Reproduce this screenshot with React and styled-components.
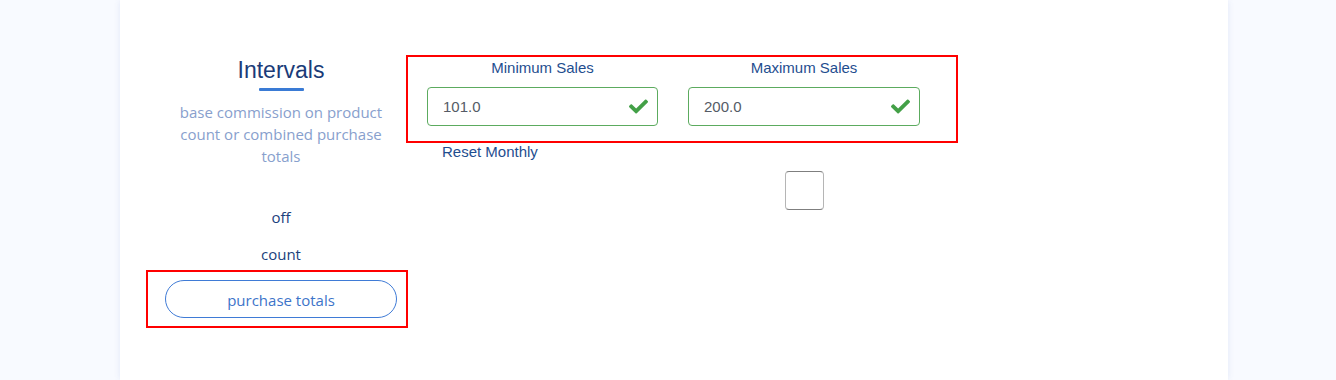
import React from "react";
import styled, { createGlobalStyle } from "styled-components";
import { FaCheck } from "react-icons/fa";

const Global = createGlobalStyle`
  html, body { margin: 0; padding: 0; background: #f8faff; }
  body { font-family: "Liberation Sans", Arial, sans-serif; }
  * { box-sizing: border-box; }
`;

const Page = styled.div`
  height: 380px;
  overflow: hidden;
  display: flex;
  padding-left: 120px;
`;

const Card = styled.div`
  width: 1108px;
  height: 380px;
  background: #ffffff;
  box-shadow: 0 0 6px rgba(70, 100, 190, 0.12);
  display: flex;
  align-items: flex-start;
  padding-top: 55px;
`;

const LeftCol = styled.div`
  width: 250px;
  margin-left: 36px;
  display: flex;
  flex-direction: column;
  align-items: center;
`;

const Title = styled.h2`
  margin: 2px 0 0;
  font-family: "Liberation Sans", Arial, sans-serif;
  font-weight: 400;
  font-size: 23px;
  line-height: 26px;
  color: #1a3b78;
`;

const Underline = styled.div`
  width: 45px;
  height: 3px;
  margin-top: 5px;
  background: #3a7bd5;
  border-radius: 1px;
`;

const Description = styled.p`
  margin: 10px 0 0;
  width: 215px;
  text-align: center;
  font-family: "Open Sans", sans-serif;
  font-size: 15px;
  line-height: 22px;
  color: #88a0cd;
`;

const Option = styled.div`
  margin-top: ${(p) => p.$mt}px;
  font-family: "Open Sans", sans-serif;
  font-size: 15px;
  line-height: 22px;
  color: #1b3f7d;
`;

const ActiveWrap = styled.div`
  align-self: flex-start;
  margin-left: -10px;
  margin-top: 5px;
  width: 262px;
  border: 2px solid #ff0000;
  padding: 8px 9px 8px 17px;
`;

const PillButton = styled.button`
  display: block;
  width: 232px;
  height: 38px;
  border: 1px solid #3f7bd6;
  border-radius: 19px;
  background: #ffffff;
  font-family: "Open Sans", sans-serif;
  font-size: 15px;
  line-height: 20px;
  color: #3d74c9;
  padding: 1px 0 0;
  cursor: pointer;
`;

const RightCol = styled.div`
  display: flex;
  flex-direction: column;
`;

const FieldBox = styled.div`
  width: 552px;
  border: 2px solid #ff0000;
  padding: 2px 0 15px 19px;
  display: grid;
  grid-template-columns: 231px 232px;
  column-gap: 30px;
`;

const Field = styled.div`
  display: flex;
  flex-direction: column;
  align-items: stretch;
`;

const Label = styled.label`
  display: block;
  text-align: center;
  font-size: 15px;
  line-height: 18px;
  color: #1f4e8f;
`;

const InputWrap = styled.div`
  margin-top: 10px;
  height: 39px;
  border: 1px solid #5cab5f;
  border-radius: 4px;
  display: flex;
  align-items: center;
  padding: 0 9px 0 15px;
`;

const Value = styled.span`
  flex: 1;
  font-size: 15px;
  color: #555b66;
`;

const CheckMark = styled(FaCheck)`
  width: 19px;
  height: 19px;
  color: #43a047;
`;

const ResetLabel = styled.div`
  padding-left: 36px;
  font-size: 15px;
  line-height: 18px;
  color: #1f4e8f;
`;

const CheckRow = styled.div`
  display: grid;
  grid-template-columns: 231px 232px;
  column-gap: 30px;
  padding-left: 21px;
  margin-top: 10px;
`;

const CheckBox = styled.div`
  grid-column: 2;
  justify-self: center;
  width: 39px;
  height: 39px;
  border: 1.5px solid #7f7f7f;
  border-left-color: #b5b5b5;
  border-right-color: #b5b5b5;
  border-radius: 4px;
  background: #fff;
`;

function SalesField({ label, value }) {
  return (
    <Field>
      <Label>{label}</Label>
      <InputWrap>
        <Value>{value}</Value>
        <CheckMark />
      </InputWrap>
    </Field>
  );
}

export default function App() {
  return (
    <>
      <Global />
      <Page>
        <Card>
          <LeftCol>
            <Title>Intervals</Title>
            <Underline />
            <Description>
              base commission on product count or combined purchase totals
            </Description>
            <Option $mt={39}>off</Option>
            <Option $mt={15}>count</Option>
            <ActiveWrap>
              <PillButton>purchase totals</PillButton>
            </ActiveWrap>
          </LeftCol>
          <RightCol>
            <FieldBox>
              <SalesField label="Minimum Sales" value="101.0" />
              <SalesField label="Maximum Sales" value="200.0" />
            </FieldBox>
            <ResetLabel>Reset Monthly</ResetLabel>
            <CheckRow>
              <CheckBox />
            </CheckRow>
          </RightCol>
        </Card>
      </Page>
    </>
  );
}
